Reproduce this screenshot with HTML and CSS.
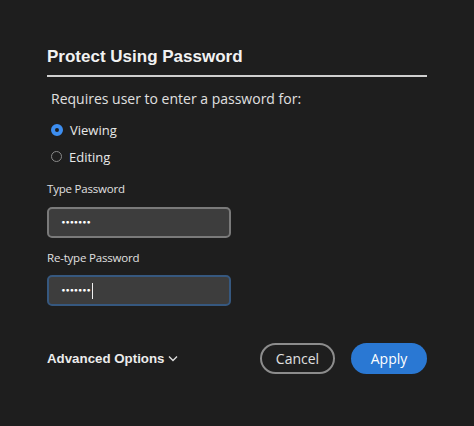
FILE: index.html
```html
<!DOCTYPE html>
<html lang="en">
<head>
<meta charset="UTF-8">
<meta name="viewport" content="width=device-width, initial-scale=1.0">
<title>Protect Using Password</title>
<link rel="stylesheet" href="styles.css">
</head>
<body>
    <div class="dialog">
        <h2 class="title">Protect Using Password</h2>
        <p class="intro">Requires user to enter a password for:</p>

        <div class="option">
            <span class="radio checked"></span>
            <span>Viewing</span>
        </div>
        <div class="option">
            <span class="radio"></span>
            <span>Editing</span>
        </div>

        <div class="label first">Type Password</div>
        <div class="field"><span class="dots">&bull;&bull;&bull;&bull;&bull;&bull;&bull;</span></div>

        <div class="label">Re-type Password</div>
        <div class="field focus"><span class="dots">&bull;&bull;&bull;&bull;&bull;&bull;&bull;</span><span class="caret"></span></div>

        <div class="footer">
            <div class="advanced">
                Advanced Options
                <svg width="10" height="7" viewBox="0 0 10 7"><path d="M1 1.5 L5 5.5 L9 1.5" fill="none" stroke="#ddd" stroke-width="1.4"/></svg>
            </div>
            <div class="buttons">
                <button class="btn cancel">Cancel</button>
                <button class="btn apply">Apply</button>
            </div>
        </div>
    </div>
</body>
</html>
```
FILE: styles.css
```css
html, body {
    margin: 0;
    height: 100%;
}
body {
    background-color: #1e1e1e;
    font-family: "Open Sans", "Liberation Sans", sans-serif;
    color: #e6e6e6;
}
.dialog {
    padding: 47px 47px 0 47px;
}
.title {
    margin: 0;
    font-family: "Liberation Sans", Arial, sans-serif;
    font-size: 17px;
    font-weight: bold;
    color: #f2f2f2;
    padding-bottom: 8px;
    border-bottom: 2px solid #cfcfcf;
}
.intro {
    margin: 12px 0 0 4px;
    font-size: 14px;
    color: #e0e0e0;
}
.option {
    display: flex;
    align-items: center;
    gap: 7px;
    margin: 12px 0 0 4px;
    font-size: 13px;
    color: #e8e8e8;
    height: 19px;
}
.option + .option {
    margin-top: 8px;
}
.radio {
    width: 9px;
    height: 9px;
    border: 1.5px solid #8a8a8a;
    border-radius: 50%;
    box-sizing: content-box;
}
.radio.checked {
    width: 4px;
    height: 4px;
    border: 4px solid #3d8ef0;
    background-color: #1e1e1e;
}
.label {
    margin-top: 12px;
    font-size: 11.5px;
    letter-spacing: -0.2px;
    color: #e0e0e0;
    height: 17px;
}
.label.first {
    margin-top: 15px;
}
.field {
    margin-top: 9px;
    height: 27px;
    border: 2px solid #7a7a7a;
    border-radius: 5px;
    background-color: #3d3d3d;
    display: flex;
    align-items: center;
    padding-left: 12px;
    box-sizing: content-box;
    width: 168px;
}
.field.focus {
    border-color: #36587f;
    margin-top: 8px;
}
.dots {
    font-family: "DejaVu Sans", sans-serif;
    font-size: 7.5px;
    font-weight: bold;
    letter-spacing: -0.6px;
    color: #ffffff;
}
.caret {
    width: 1px;
    height: 16px;
    background-color: #f0f0f0;
    margin-left: 2px;
}
.footer {
    display: flex;
    align-items: center;
    justify-content: space-between;
    margin-top: 37px;
}
.advanced {
    font-family: "Liberation Sans", Arial, sans-serif;
    font-weight: bold;
    font-size: 13.3px;
    color: #ececec;
    display: flex;
    align-items: center;
    gap: 4px;
}
.buttons {
    display: flex;
    gap: 16px;
}
.btn {
    height: 31px;
    border-radius: 16px;
    font-family: "Open Sans", "Liberation Sans", sans-serif;
    font-size: 14px;
    padding: 0;
    cursor: pointer;
}
.cancel {
    width: 75px;
    background-color: transparent;
    border: 2px solid #8c8c8c;
    color: #e0e0e0;
}
.apply {
    width: 76px;
    background-color: #2a78d3;
    border: none;
    color: #ffffff;
}
```
